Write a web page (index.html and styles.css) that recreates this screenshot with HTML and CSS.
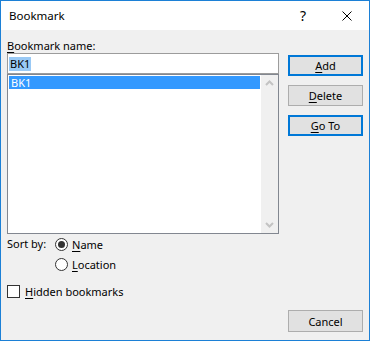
FILE: index.html
```html
<!DOCTYPE html>
<html>
<head>
<meta charset="utf-8">
<link rel="stylesheet" href="styles.css">
</head>
<body>
<div class="window">
  <div class="titlebar">
    <span class="title">Bookmark</span>
    <span class="help">?</span>
    <svg class="close" width="10" height="10" viewBox="0 0 10 10"><path d="M0.5 0.5 L9.5 9.5 M9.5 0.5 L0.5 9.5" stroke="#000" stroke-width="1" fill="none"/></svg>
  </div>
  <div class="content">
    <div class="left">
      <div class="label"><u>B</u>ookmark name:</div>
      <div class="textbox"><span class="sel">BK1</span></div>
      <div class="listbox">
        <div class="items">
          <div class="item selected">BK1</div>
        </div>
        <div class="scrollbar">
          <svg class="arrow" width="17" height="17" viewBox="0 0 17 17"><path d="M5 10 L8.5 6.5 L12 10" stroke="#c3c3c3" stroke-width="2" fill="none"/></svg>
          <svg class="arrow" width="17" height="17" viewBox="0 0 17 17"><path d="M5 7 L8.5 10.5 L12 7" stroke="#c3c3c3" stroke-width="2" fill="none"/></svg>
        </div>
      </div>
      <div class="sort">
        <div class="sort-label">Sort by:</div>
        <div class="radios">
          <div class="radio-row"><span class="radio checked"></span><span><u>N</u>ame</span></div>
          <div class="radio-row"><span class="radio"></span><span><u>L</u>ocation</span></div>
        </div>
      </div>
      <div class="check-row"><span class="checkbox"></span><span><u>H</u>idden bookmarks</span></div>
    </div>
    <div class="right">
      <div class="btn default"><u>A</u>dd</div>
      <div class="btn"><u>D</u>elete</div>
      <div class="btn default"><u>G</u>o To</div>
      <div class="btn cancel">Cancel</div>
    </div>
  </div>
</div>
</body>
</html>
```
FILE: styles.css
```css
html, body {
  margin: 0;
  padding: 0;
}
body {
  font-family: "Noto Sans", "Open Sans", sans-serif;
  font-size: 11px;
  color: #000;
}
u {
  text-decoration: underline;
  text-underline-offset: 2px;
}
.window {
  width: 370px;
  height: 341px;
  box-sizing: border-box;
  border: 1px solid #1c80d6;
  background: #f0f0f0;
  display: flex;
  flex-direction: column;
}
.titlebar {
  height: 29px;
  background: #fff;
  display: flex;
  align-items: center;
  padding-left: 8px;
}
.title {
  font-size: 11.5px;
  flex: 1;
}
.help {
  font-size: 14px;
  margin-right: 36px;
  line-height: 14px;
}
.close {
  margin-right: 17px;
}
.content {
  flex: 1;
  display: grid;
  grid-template-columns: 272px 75px;
  column-gap: 9px;
  padding: 8px 6px 8px 6px;
}
.left {
  display: flex;
  flex-direction: column;
}
.label {
  line-height: 15px;
}
.textbox {
  height: 19px;
  border: 1px solid #9c9c9c;
  background: #fff;
  display: flex;
  align-items: center;
  padding-left: 1px;
}
.sel {
  background: #99c9f5;
  line-height: 14px;
  padding: 0 1px;
}
.listbox {
  height: 158px;
  border: 1px solid #828790;
  background: #fff;
  display: flex;
}
.items {
  flex: 1;
  padding: 1px;
}
.item {
  height: 13px;
  line-height: 13px;
  padding-left: 2px;
}
.selected {
  background: #3399ff;
  color: #fff;
}
.scrollbar {
  width: 17px;
  background: #f0f0f0;
  display: flex;
  flex-direction: column;
  justify-content: space-between;
}
.arrow {
  display: block;
}
.sort {
  display: flex;
}
.sort-label {
  width: 48px;
  line-height: 20px;
}
.radios {
  display: flex;
  flex-direction: column;
}
.radio-row, .check-row {
  display: flex;
  align-items: center;
  height: 20px;
}
.radio {
  width: 11px;
  height: 11px;
  border: 1px solid #333;
  border-radius: 50%;
  background: #fff;
  margin-right: 4px;
  display: flex;
  align-items: center;
  justify-content: center;
}
.radio.checked::after {
  content: "";
  width: 7px;
  height: 7px;
  border-radius: 50%;
  background: #333;
}
.check-row {
  margin-top: 7px;
}
.checkbox {
  width: 11px;
  height: 11px;
  border: 1px solid #333;
  background: #fff;
  margin-right: 5px;
}
.right {
  display: flex;
  flex-direction: column;
  padding-top: 17px;
  gap: 9px;
}
.btn {
  height: 19px;
  border: 1px solid #adadad;
  background: #e1e1e1;
  display: flex;
  align-items: center;
  justify-content: center;
}
.btn.default {
  border: 2px solid #0078d7;
  height: 17px;
}
.btn.cancel {
  margin-top: auto;
  height: 20px;
}
```
